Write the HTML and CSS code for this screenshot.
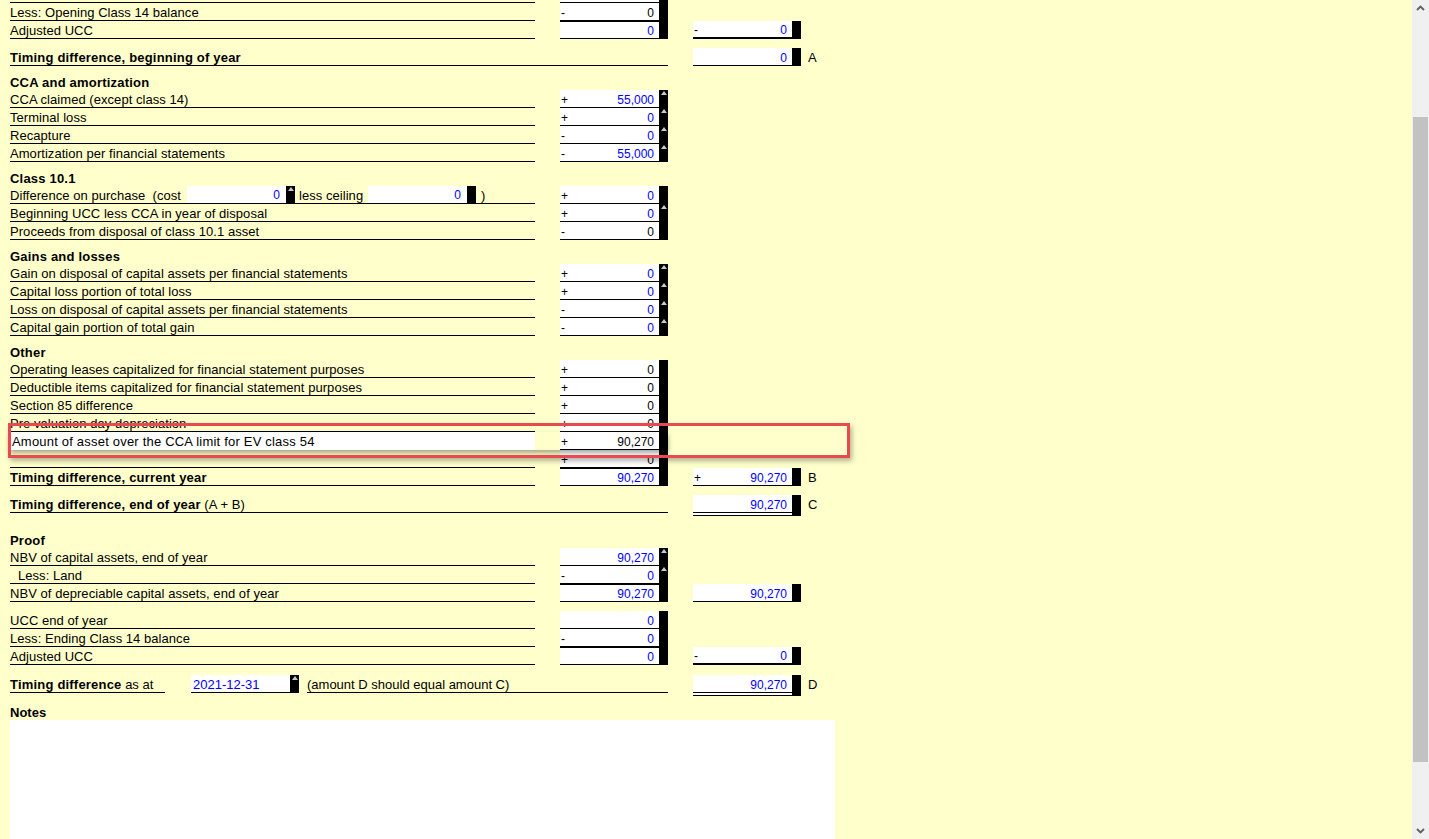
FILE: index.html
```html
<!DOCTYPE html>
<html>
<head>
<meta charset="utf-8">
<link rel="stylesheet" href="styles.css">
</head>
<body>
<div class="app">
  <main class="sheet">
    <div class="content">

      <div class="row">
        <div class="lbl"></div>
        <div class="box"><div class="val"></div><div class="bar"></div></div>
      </div>
      <div class="row">
        <div class="lbl">Less: Opening Class 14 balance</div>
        <div class="box"><div class="val"><span>-</span><span class="num">0</span></div><div class="bar"></div></div>
      </div>
      <div class="row">
        <div class="lbl">Adjusted UCC</div>
        <div class="box"><div class="val tot"><span class="num blue">0</span></div><div class="bar"></div></div>
        <div class="box c3"><div class="val thick"><span>-</span><span class="num blue">0</span></div><div class="bar"></div></div>
      </div>

      <div class="row gap9">
        <div class="lbl wide"><b>Timing difference, beginning of year</b></div>
        <div class="box c3"><div class="val"><span class="num blue">0</span></div><div class="bar"></div></div>
        <div class="letter">A</div>
      </div>

      <div class="head">CCA and amortization</div>
      <div class="row">
        <div class="lbl">CCA claimed (except class 14)</div>
        <div class="box"><div class="val"><span>+</span><span class="num blue">55,000</span></div><div class="bar"><i class="up"></i></div></div>
      </div>
      <div class="row">
        <div class="lbl">Terminal loss</div>
        <div class="box"><div class="val"><span>+</span><span class="num blue">0</span></div><div class="bar"><i class="up"></i></div></div>
      </div>
      <div class="row">
        <div class="lbl">Recapture</div>
        <div class="box"><div class="val"><span>-</span><span class="num blue">0</span></div><div class="bar"><i class="up"></i></div></div>
      </div>
      <div class="row">
        <div class="lbl">Amortization per financial statements</div>
        <div class="box"><div class="val"><span>-</span><span class="num blue">55,000</span></div><div class="bar"><i class="up"></i></div></div>
      </div>

      <div class="head">Class 10.1</div>
      <div class="row">
        <div class="lbl inline">
          <span class="t1">Difference on purchase&nbsp; (cost</span>
          <span class="ibox"><span class="ival">0</span><span class="bar"><i class="up"></i></span></span>
          <span class="t2">less ceiling</span>
          <span class="ibox"><span class="ival">0</span><span class="bar"></span></span>
          <span class="t3">)</span>
        </div>
        <div class="box"><div class="val"><span>+</span><span class="num blue">0</span></div><div class="bar"></div></div>
      </div>
      <div class="row">
        <div class="lbl">Beginning UCC less CCA in year of disposal</div>
        <div class="box"><div class="val"><span>+</span><span class="num blue">0</span></div><div class="bar"><i class="up"></i></div></div>
      </div>
      <div class="row">
        <div class="lbl">Proceeds from disposal of class 10.1 asset</div>
        <div class="box"><div class="val"><span>-</span><span class="num">0</span></div><div class="bar"></div></div>
      </div>

      <div class="head">Gains and losses</div>
      <div class="row">
        <div class="lbl">Gain on disposal of capital assets per financial statements</div>
        <div class="box"><div class="val"><span>+</span><span class="num blue">0</span></div><div class="bar"><i class="up"></i></div></div>
      </div>
      <div class="row">
        <div class="lbl">Capital loss portion of total loss</div>
        <div class="box"><div class="val"><span>+</span><span class="num blue">0</span></div><div class="bar"><i class="up"></i></div></div>
      </div>
      <div class="row">
        <div class="lbl">Loss on disposal of capital assets per financial statements</div>
        <div class="box"><div class="val"><span>-</span><span class="num blue">0</span></div><div class="bar"><i class="up"></i></div></div>
      </div>
      <div class="row">
        <div class="lbl">Capital gain portion of total gain</div>
        <div class="box"><div class="val"><span>-</span><span class="num blue">0</span></div><div class="bar"><i class="up"></i></div></div>
      </div>

      <div class="head">Other</div>
      <div class="row">
        <div class="lbl">Operating leases capitalized for financial statement purposes</div>
        <div class="box"><div class="val"><span>+</span><span class="num">0</span></div><div class="bar"></div></div>
      </div>
      <div class="row">
        <div class="lbl">Deductible items capitalized for financial statement purposes</div>
        <div class="box"><div class="val"><span>+</span><span class="num">0</span></div><div class="bar"></div></div>
      </div>
      <div class="row">
        <div class="lbl">Section 85 difference</div>
        <div class="box"><div class="val"><span>+</span><span class="num">0</span></div><div class="bar"></div></div>
      </div>
      <div class="row">
        <div class="lbl">Pre valuation day depreciation</div>
        <div class="box"><div class="val"><span>+</span><span class="num">0</span></div><div class="bar"></div></div>
      </div>
      <div class="row hl">
        <div class="lbl hl-lbl">Amount of asset over the CCA limit for EV class 54</div>
        <div class="box"><div class="val"><span>+</span><span class="num">90,270</span></div><div class="bar"></div></div>
        <div class="hl-mark"></div>
      </div>
      <div class="row">
        <div class="lbl"></div>
        <div class="box"><div class="val"><span>+</span><span class="num">0</span></div><div class="bar"></div></div>
      </div>
      <div class="row">
        <div class="lbl"><b>Timing difference, current year</b></div>
        <div class="box"><div class="val tot"><span class="num blue">90,270</span></div><div class="bar"></div></div>
        <div class="box c3"><div class="val"><span>+</span><span class="num blue">90,270</span></div><div class="bar"></div></div>
        <div class="letter">B</div>
      </div>

      <div class="row gap9">
        <div class="lbl wide"><b>Timing difference, end of year</b> (A + B)</div>
        <div class="box c3 dbl"><div class="val"><span class="num blue">90,270</span></div><div class="bar"></div></div>
        <div class="letter">C</div>
      </div>

      <div class="head proof">Proof</div>
      <div class="row">
        <div class="lbl">NBV of capital assets, end of year</div>
        <div class="box"><div class="val"><span class="num blue">90,270</span></div><div class="bar"><i class="up"></i></div></div>
      </div>
      <div class="row">
        <div class="lbl indent">Less: Land</div>
        <div class="box"><div class="val"><span>-</span><span class="num blue">0</span></div><div class="bar"><i class="up"></i></div></div>
      </div>
      <div class="row">
        <div class="lbl">NBV of depreciable capital assets, end of year</div>
        <div class="box"><div class="val tot"><span class="num blue">90,270</span></div><div class="bar"></div></div>
        <div class="box c3"><div class="val"><span class="num blue">90,270</span></div><div class="bar"></div></div>
      </div>

      <div class="row gap9">
        <div class="lbl">UCC end of year</div>
        <div class="box"><div class="val"><span class="num blue">0</span></div><div class="bar"></div></div>
      </div>
      <div class="row">
        <div class="lbl">Less: Ending Class 14 balance</div>
        <div class="box"><div class="val"><span>-</span><span class="num blue">0</span></div><div class="bar"></div></div>
      </div>
      <div class="row">
        <div class="lbl">Adjusted UCC</div>
        <div class="box"><div class="val tot"><span class="num blue">0</span></div><div class="bar"></div></div>
        <div class="box c3"><div class="val thick"><span>-</span><span class="num blue">0</span></div><div class="bar"></div></div>
      </div>

      <div class="row gap10">
        <div class="asat">
          <div class="seg1"><b>Timing difference</b> as at</div>
          <div class="date"><div class="dval">2021-12-31</div><div class="bar"><i class="up"></i></div></div>
          <div class="seg3">(amount D should equal amount C)</div>
        </div>
        <div class="box c3 dbl"><div class="val"><span class="num blue">90,270</span></div><div class="bar"></div></div>
        <div class="letter">D</div>
      </div>

      <div class="head notes-head">Notes</div>
      <div class="notes"></div>
    </div>
  </main>
  <div class="scrollbar">
    <div class="sb-btn">
      <svg width="17" height="17" viewBox="0 0 17 17"><polyline points="5,10 8.5,6.5 12,10" fill="none" stroke="#606060" stroke-width="1.8"/></svg>
    </div>
    <div class="sb-track"><div class="sb-thumb"></div></div>
    <div class="sb-btn">
      <svg width="17" height="17" viewBox="0 0 17 17"><polyline points="5,7 8.5,10.5 12,7" fill="none" stroke="#606060" stroke-width="1.8"/></svg>
    </div>
  </div>
</div>
</body>
</html>
```

FILE: styles.css
```css
html, body {
  margin: 0;
  padding: 0;
  height: 100%;
  overflow: hidden;
}
body {
  font-family: "Liberation Sans", Arial, sans-serif;
  font-size: 13px;
  color: #000;
  background: #ffffcc;
}
b { letter-spacing: 0.2px; }
.app {
  display: flex;
  height: 839px;
}
.sheet {
  flex: 1;
  overflow: hidden;
  background: #ffffcc;
}
.content {
  margin-top: -15px;
  padding-left: 10px;
}

/* rows */
.row {
  display: grid;
  grid-template-columns: 525px 25px 108px 25px 108px 7px 30px;
  grid-template-rows: 18px;
  height: 18px;
}
.gap9 { margin-top: 9px; }
.gap10 { margin-top: 10px; }

.lbl {
  grid-column: 1;
  border-bottom: 1px solid #000;
  line-height: 19px;
  height: 17px;
  white-space: nowrap;
  letter-spacing: 0.05px;
}
.lbl.wide { grid-column: 1 / 4; }
.lbl.indent { padding-left: 8px; }

.box {
  grid-column: 3;
  display: flex;
  height: 18px;
  align-self: start;
}
.box.c3 { grid-column: 5; }
.box.dbl { height: 21px; }

.val {
  flex: 1;
  display: flex;
  justify-content: space-between;
  background: #fff;
  border-bottom: 1px solid #000;
  box-sizing: border-box;
  height: 100%;
  font-size: 12px;
  line-height: 20px;
  padding: 0 5px 0 1px;
}
.val .num { margin-left: auto; }
.val.tot { border-top: 1px solid #000; line-height: 19px; }
.val.thick { border-bottom-width: 2px; line-height: 19px; }
.box.dbl .val { border-bottom: 4px double #000; }

.bar {
  width: 9px;
  background: #000;
  display: flex;
  justify-content: center;
  align-items: flex-start;
  padding-top: 1px;
  box-sizing: border-box;
}
.up {
  display: block;
  width: 0;
  height: 0;
  border-left: 3px solid transparent;
  border-right: 3px solid transparent;
  border-bottom: 4px solid #c8c8c8;
}

.blue { color: #0000ff; }
.letter {
  grid-column: 7;
  line-height: 19px;
}

/* headings */
.head {
  height: 24px;
  display: flex;
  align-items: flex-end;
  font-weight: bold;
  letter-spacing: 0.2px;
  line-height: 15px;
}
.head.proof { margin-top: 11px; }
.head.notes-head { margin-top: 3px; letter-spacing: 0; }

/* inline boxes (Class 10.1) */
.lbl.inline { display: flex; }
.t1 { width: 177px; }
.t2 { width: 73px; padding-left: 4px; box-sizing: border-box; }
.t3 { padding-left: 5px; }
.ibox {
  display: flex;
  width: 108px;
  height: 17px;
}
.ival {
  flex: 1;
  background: #fff;
  color: #0000ff;
  text-align: right;
  padding-right: 6px;
  font-size: 12px;
}

/* Timing difference as at */
.asat {
  grid-column: 1 / 4;
  display: flex;
  height: 18px;
}
.seg1 {
  width: 155px;
  border-bottom: 1px solid #000;
  line-height: 19px;
  height: 17px;
  white-space: nowrap;
}
.date {
  margin-left: 26px;
  width: 108px;
  display: flex;
  height: 18px;
}
.dval {
  width: 99px;
  background: #fff;
  color: #0000ff;
  border-bottom: 1px solid #000;
  box-sizing: border-box;
  padding-left: 2px;
  line-height: 19px;
}
.seg3 {
  margin-left: 8px;
  flex: 1;
  border-bottom: 1px solid #000;
  line-height: 19px;
  height: 17px;
  white-space: nowrap;
}

/* highlighted row */
.row.hl {
  position: relative;
  width: 658px;
  grid-template-columns: 525px 25px 108px;
  box-shadow: 0 3px 5px rgba(0, 0, 0, 0.35);
}
.hl-lbl {
  background: #fff;
  border-bottom: none;
  height: 18px;
  line-height: 19px;
  padding-left: 2px;
  font-size: 13px;
  letter-spacing: 0.2px;
}
.hl-mark {
  position: absolute;
  left: -2px;
  top: -9px;
  width: 842px;
  height: 35px;
  border: 3px solid #e84a4f;
  box-sizing: border-box;
  box-shadow: 2px 3px 5px rgba(0, 0, 0, 0.3);
}

/* notes */
.notes {
  width: 825px;
  height: 140px;
  background: #fff;
}

/* scrollbar */
.scrollbar {
  width: 17px;
  background: #f0f0f0;
  display: flex;
  flex-direction: column;
}
.sb-btn {
  height: 17px;
  display: flex;
}
.sb-track {
  flex: 1;
  padding-top: 100px;
}
.sb-thumb {
  margin: 0 1px;
  height: 645px;
  background: #c2c2c2;
}
```
